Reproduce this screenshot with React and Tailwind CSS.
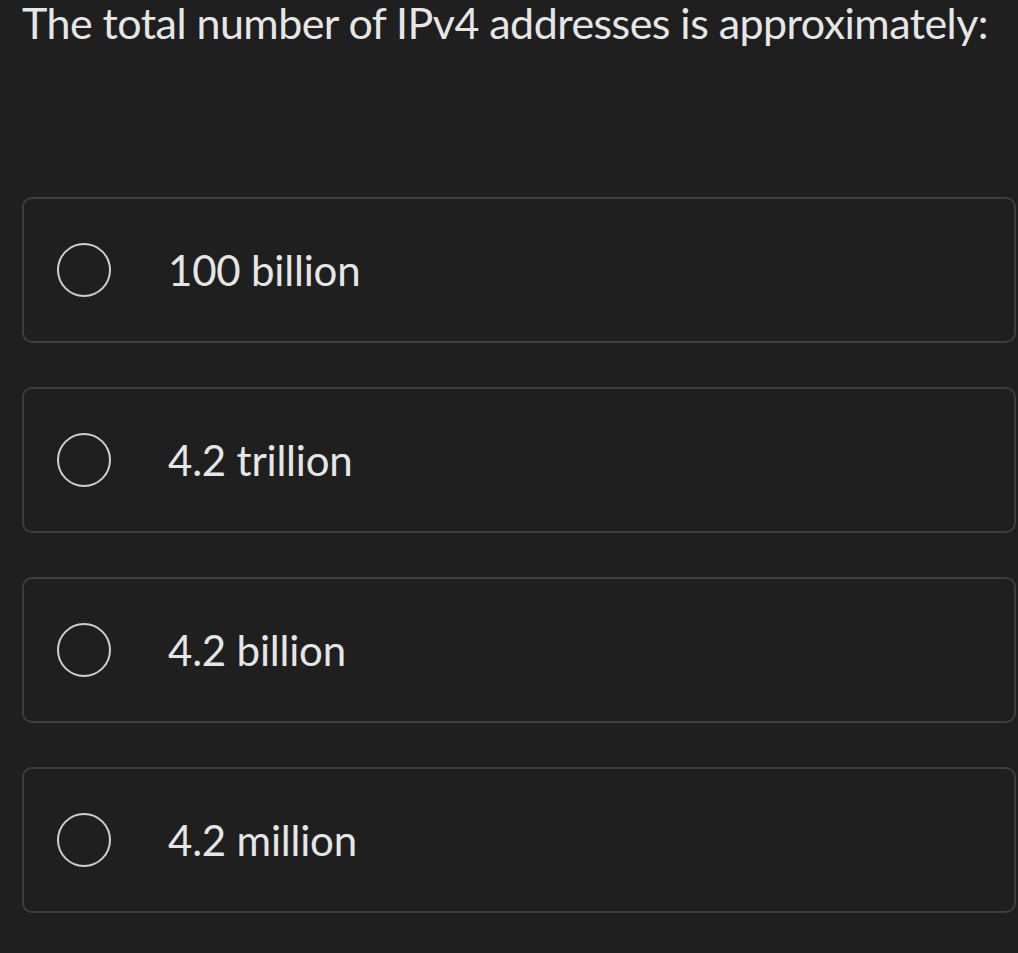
const options = ['100 billion', '4.2 trillion', '4.2 billion', '4.2 million'];

export default function App() {
  return (
    <div
      className="min-h-screen bg-[#1f1f1f] text-[#e6e6e6] pl-[22px] pr-[2px]"
      style={{ fontFamily: 'Lato, "Noto Sans", sans-serif' }}
    >
      <h1 className="text-[43px] leading-[46px] tracking-[-0.55px] whitespace-nowrap font-normal">
        The total number of IPv4 addresses is approximately:
      </h1>
      <div className="mt-[151px] flex flex-col gap-[44px]">
        {options.map((opt) => (
          <div
            key={opt}
            className="h-[146px] flex items-center border-2 border-[#3d3d3d] rounded-[10px] pl-[33px]"
          >
            <div className="w-[54px] h-[54px] rounded-full border-2 border-[#cfcfcf] shrink-0" />
            <span className="ml-[57px] text-[42px] leading-none tracking-[-0.2px]">{opt}</span>
          </div>
        ))}
      </div>
    </div>
  );
}
